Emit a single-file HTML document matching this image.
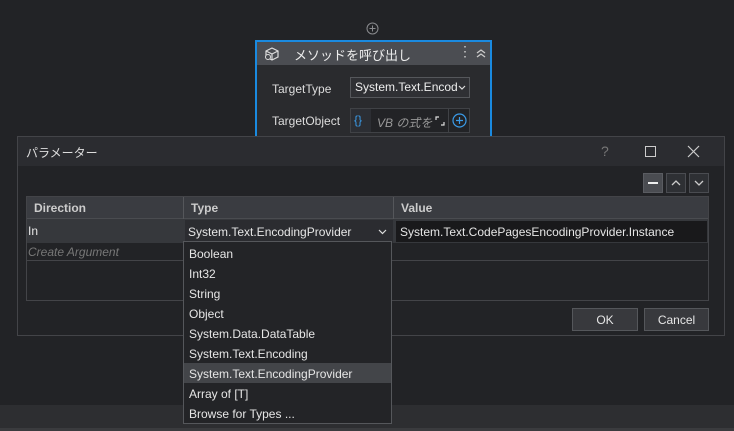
<!DOCTYPE html>
<html><head><meta charset="utf-8"><style>
*{margin:0;padding:0;box-sizing:border-box}
body{width:734px;height:431px;background:#222326;position:relative;overflow:hidden;font-family:"Liberation Sans","Noto Sans CJK JP",sans-serif;font-size:12px;color:#e6e6e6}
.a{position:absolute}
</style></head><body>
<div class="a" style="left:0;top:405px;width:734px;height:23px;background:#2d2e31"></div>
<div class="a" style="left:0;top:428px;width:734px;height:3px;background:#3a3b3e"></div>
<svg class="a" style="left:366px;top:22px" width="13" height="13"><circle cx="6.5" cy="6.5" r="5.5" fill="none" stroke="#8a8b8e"/><path d="M6.5 3.5v6M3.5 6.5h6" stroke="#8a8b8e"/></svg>
<div class="a" style="left:255px;top:40px;width:237px;height:110px;border:2px solid #1a8ae0;border-bottom:none;background:#2a2b2e">
 <div style="height:23px;background:#4b4d52;position:relative">
  <svg class="a" style="left:6px;top:3px" width="18" height="17"><path d="M3 6l6-3 6 3v6l-6 3-6-3z M3 6l6 3 6-3 M9 9v6" fill="none" stroke="#ddd" stroke-width="1.2"/><circle cx="5" cy="12" r="2.5" fill="#4b4d52" stroke="#ddd"/></svg>
  <span class="a" style="left:37px;top:3px;font-size:13px;color:#eee">メソッドを呼び出し</span>
  <span class="a" style="left:201px;top:1px;font-size:14px;color:#ccc">⋮</span>
  <svg class="a" style="left:218px;top:5px" width="12" height="12"><path d="M2 6l4-3 4 3M2 10l4-3 4 3" fill="none" stroke="#ccc" stroke-width="1.3"/></svg>
 </div>
 <span class="a" style="left:15px;top:40px;color:#ddd">TargetType</span>
 <div class="a" style="left:93px;top:35px;width:120px;height:21px;border:1px solid #55575b;background:#2f3034;padding:2px 4px;color:#eee;overflow:hidden;white-space:nowrap">System.Text.Encod<svg style="position:absolute;right:3px;top:7px" width="8" height="5"><path d="M1 1l3 3 3-3" fill="none" stroke="#ddd" stroke-width="1.2"/></svg></div>
 <span class="a" style="left:15px;top:72px;color:#ddd">TargetObject</span>
 <div class="a" style="left:93px;top:66px;width:120px;height:25px;border:1px solid #404246;background:#222326">
  <div class="a" style="left:0;top:0;width:20px;height:23px;background:#2c2e33;color:#3a9be8;padding:4px 3px">{}</div>
  <span class="a" style="left:26px;top:5px;color:#999;font-style:italic">VB の式を</span>
  <svg class="a" style="left:84px;top:7px" width="10" height="10"><path d="M1 4V1h3M6 9h3V6" fill="none" stroke="#ddd" stroke-width="1.2"/></svg>
  <div class="a" style="left:97px;top:0;width:1px;height:23px;background:#404246"></div>
  <svg class="a" style="left:101px;top:4px" width="15" height="15"><circle cx="7.5" cy="7.5" r="6.5" fill="none" stroke="#3a9be8" stroke-width="1.2"/><path d="M7.5 4v7M4 7.5h7" stroke="#3a9be8" stroke-width="1.2"/></svg>
 </div>
</div>
<div class="a" style="left:17px;top:136px;width:708px;height:200px;border:1px solid #434448;background:#222326">
 <div style="height:29px;background:#2b2c30;position:relative">
  <span class="a" style="left:8px;top:7px;color:#ddd">パラメーター</span>
  <span class="a" style="left:583px;top:6px;color:#777;font-size:14px">?</span>
  <div class="a" style="left:627px;top:9px;width:11px;height:11px;border:1px solid #ccc"></div>
  <svg class="a" style="left:669px;top:8px" width="13" height="13"><path d="M1 1l11 11M12 1L1 12" stroke="#ccc" stroke-width="1.2"/></svg>
 </div>
 <div class="a" style="left:625px;top:36px;width:20px;height:20px;background:#4a4c51;border:1px solid #5a5c61"><div style="margin:8px 4px;height:2px;background:#eee"></div></div>
 <div class="a" style="left:648px;top:36px;width:20px;height:20px;background:#2e3034;border:1px solid #4a4c51"><svg width="18" height="18"><path d="M5 11l4-4 4 4" fill="none" stroke="#ccc" stroke-width="1.3"/></svg></div>
 <div class="a" style="left:671px;top:36px;width:20px;height:20px;background:#2e3034;border:1px solid #4a4c51"><svg width="18" height="18"><path d="M5 7l4 4 4-4" fill="none" stroke="#ccc" stroke-width="1.3"/></svg></div>
 <div class="a" style="left:8px;top:59px;width:683px;height:105px;border:1px solid #434448">
  <div style="height:22px;background:#3a3c41;position:relative;border-bottom:1px solid #4a4c50;font-weight:bold;color:#ccc">
   <span class="a" style="left:7px;top:4px">Direction</span>
   <span class="a" style="left:164px;top:4px">Type</span>
   <span class="a" style="left:374px;top:4px">Value</span>
   <div class="a" style="left:156px;top:0;width:1px;height:22px;background:#55575b"></div>
   <div class="a" style="left:366px;top:0;width:1px;height:22px;background:#55575b"></div>
  </div>
  <div style="height:24px;background:#36383c;position:relative">
   <span class="a" style="left:1px;top:5px">In</span>
   <div class="a" style="left:158px;top:1px;width:208px;height:23px;background:#2b2c30;padding:5px 3px">System.Text.EncodingProvider<svg style="position:absolute;right:6px;top:9px" width="9" height="6"><path d="M1 1l3.5 3.5L8 1" fill="none" stroke="#ddd" stroke-width="1.2"/></svg></div>
   <div class="a" style="left:369px;top:2px;width:311px;height:21px;background:#19191b;padding:4px 4px">System.Text.CodePagesEncodingProvider.Instance</div>
  </div>
  <div style="height:18px;border-bottom:1px solid #434448;position:relative"><span class="a" style="left:1px;top:2px;color:#777;font-style:italic">Create Argument</span></div>
 </div>
 <div class="a" style="left:554px;top:171px;width:66px;height:23px;background:#38393d;border:1px solid #55575b;text-align:center;padding-top:4px">OK</div>
 <div class="a" style="left:626px;top:171px;width:65px;height:23px;background:#38393d;border:1px solid #55575b;text-align:center;padding-top:4px">Cancel</div>
</div>
<div class="a" style="left:183px;top:241px;width:209px;height:183px;background:#232427;border:1px solid #55575b;padding-top:1px">
 <div style="height:20px;padding:4px 5px">Boolean</div>
 <div style="height:20px;padding:4px 5px">Int32</div>
 <div style="height:20px;padding:4px 5px">String</div>
 <div style="height:20px;padding:4px 5px">Object</div>
 <div style="height:20px;padding:4px 5px">System.Data.DataTable</div>
 <div style="height:20px;padding:4px 5px">System.Text.Encoding</div>
 <div style="height:20px;padding:4px 5px;background:#434549">System.Text.EncodingProvider</div>
 <div style="height:20px;padding:4px 5px">Array of [T]</div>
 <div style="height:20px;padding:4px 5px">Browse for Types ...</div>
</div>
</body></html>
